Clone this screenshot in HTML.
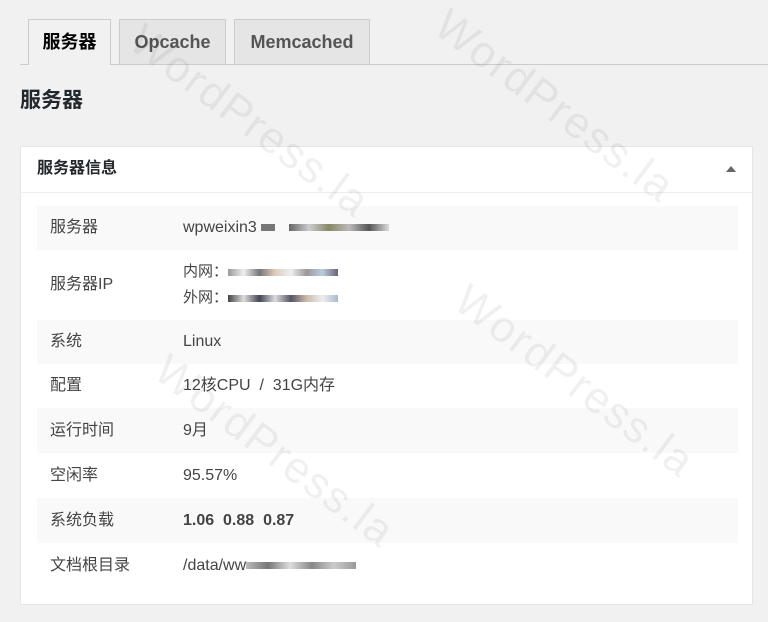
<!DOCTYPE html>
<html><head><meta charset="utf-8"><style>
body{margin:0;width:768px;height:622px;background:#f1f1f1;font-family:"Liberation Sans","Noto Sans CJK SC",sans-serif;color:#23282d;position:relative;overflow:hidden}
.nav{position:absolute;left:20px;right:0;top:64px;border-top:1px solid #ccc}
.tab{position:absolute;top:19px;height:45px;box-sizing:border-box;border:1px solid #ccc;border-bottom:none;background:#e5e5e5;font-size:18px;font-weight:bold;color:#555;line-height:44px;text-align:center}
.tab.a{background:#f1f1f1;color:#000;height:46px}
h1{position:absolute;left:20px;top:84px;margin:0;font-size:21px;font-weight:bold;color:#23282d}
.box{position:absolute;left:20px;top:146px;width:733px;height:459px;background:#fff;border:1px solid #e5e5e5;box-sizing:border-box}
.hd{height:45px;border-bottom:1px solid #eee;font-size:16px;font-weight:bold;line-height:44px;padding-left:16px}
.arr{position:absolute;right:16px;top:19px;width:0;height:0;border-left:5px solid transparent;border-right:5px solid transparent;border-bottom:6px solid #666}
.row{position:absolute;left:16px;width:701px;font-size:16px;color:#444;display:flex;align-items:center}
.row.o{background:#f9f9f9}
.l{position:absolute;left:13px;line-height:20px}
.v{position:absolute;left:146px;line-height:20px}
.px{display:inline-block;height:7px;vertical-align:middle}
.wm{position:absolute;font-size:44px;color:rgba(0,0,0,0.06);transform:rotate(37deg);transform-origin:left top;white-space:nowrap;font-family:"Liberation Sans",sans-serif;letter-spacing:2px}
</style></head><body>
<div class="nav"></div>
<div class="tab a" style="left:28px;width:83px">服务器</div>
<div class="tab" style="left:119px;width:107px">Opcache</div>
<div class="tab" style="left:234px;width:136px">Memcached</div>
<h1>服务器</h1>
<div class="box">
<div class="hd">服务器信息<div class="arr"></div></div>
<div class="row o" style="top:59px;height:44px"><span class="l">服务器</span><span class="v">wpweixin3 <span class="px" style="width:14px;background:#777"></span> &nbsp;&nbsp;<span class="px" style="width:100px;background:linear-gradient(90deg,#666,#ccc,#886,#bbb,#555,#ddd)"></span></span></div>
<div class="row" style="top:103px;height:70px"><span class="l">服务器IP</span><span class="v" style="font-size:15px;line-height:26px">内网：<span class="px" style="width:110px;background:linear-gradient(90deg,#999,#eee,#777,#dcb,#eee,#999,#bcd,#667)"></span><br>外网：<span class="px" style="width:110px;background:linear-gradient(90deg,#444,#ddd,#445,#ddd,#556,#cba,#eee,#abc)"></span></span></div>
<div class="row o" style="top:173px;height:44px"><span class="l">系统</span><span class="v">Linux</span></div>
<div class="row" style="top:217px;height:44px"><span class="l">配置</span><span class="v">12核CPU &nbsp;/ &nbsp;31G内存</span></div>
<div class="row o" style="top:261px;height:45px"><span class="l">运行时间</span><span class="v">9月</span></div>
<div class="row" style="top:306px;height:45px"><span class="l">空闲率</span><span class="v">95.57%</span></div>
<div class="row o" style="top:351px;height:45px"><span class="l">系统负载</span><span class="v" style="font-weight:bold">1.06 &nbsp;0.88 &nbsp;0.87</span></div>
<div class="row" style="top:396px;height:46px"><span class="l">文档根目录</span><span class="v">/data/ww<span class="px" style="width:110px;background:linear-gradient(90deg,#bbb,#777,#ddd,#888,#ccc,#999)"></span></span></div>
</div>
<div class="wm" style="left:150px;top:15px">WordPress.la</div>
<div class="wm" style="left:455px;top:0px">WordPress.la</div>
<div class="wm" style="left:475px;top:275px">WordPress.la</div>
<div class="wm" style="left:175px;top:345px">WordPress.la</div>
</body></html>
